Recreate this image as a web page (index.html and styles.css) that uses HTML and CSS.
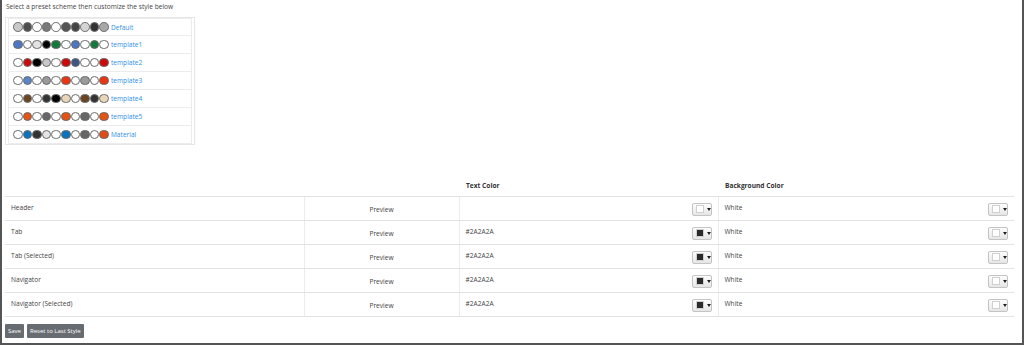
FILE: index.html
```html
<html lang="en">
<head>
    <meta charset="UTF-8">
    <title>Style Settings</title>
    <link rel="stylesheet" href="styles.css">
</head>
<body>
    <div class="frame">
        <p class="intro">Select a preset scheme then customize the style below</p>

        <div class="presets" id="presets">
            <!-- preset rows are built below -->
        </div>

        <table class="styles">
            <thead>
                <tr>
                    <th class="col-name"></th>
                    <th class="col-preview"></th>
                    <th class="col-text">Text Color</th>
                    <th class="col-bg">Background Color</th>
                </tr>
            </thead>
            <tbody id="style-rows">
            </tbody>
        </table>

        <div class="actions">
            <button>Save</button>
            <button>Reset to Last Style</button>
        </div>
    </div>

    <script>
        const presets = [
            { name: 'Default', colors: ['#c8c8c8', '#4e4e4e', '#fff', '#7a7a7a', '#fff', '#555', '#444', '#d4d4d4', '#333', '#a8a8a8'] },
            { name: 'template1', colors: ['#4b76c2', '#fff', '#e2e2e2', '#000', '#137a3c', '#fff', '#4b76c2', '#fff', '#137a3c', '#fff'] },
            { name: 'template2', colors: ['#fff', '#cc0a0a', '#000', '#c8c8c8', '#fff', '#cc0a0a', '#3b5584', '#fff', '#fff', '#cc0a0a'] },
            { name: 'template3', colors: ['#fff', '#5a84c8', '#fff', '#9a9a9a', '#fff', '#ea3510', '#fff', '#9a9a9a', '#fff', '#ea3510'] },
            { name: 'template4', colors: ['#fff', '#6a4522', '#fff', '#333', '#000', '#e9d6b8', '#fff', '#6a4522', '#333', '#e9d6b8'] },
            { name: 'template5', colors: ['#fff', '#e25314', '#fff', '#666', '#fff', '#e25314', '#fff', '#666', '#fff', '#e25314'] },
            { name: 'Material', colors: ['#fff', '#0b73bd', '#333', '#e4e4e4', '#fff', '#0b73bd', '#fff', '#666', '#fff', '#e04b16'] }
        ];

        const rows = [
            { name: 'Header', text: '', textSwatch: '#fff', bg: 'White' },
            { name: 'Tab', text: '#2A2A2A', textSwatch: '#2a2a2a', bg: 'White' },
            { name: 'Tab (Selected)', text: '#2A2A2A', textSwatch: '#2a2a2a', bg: 'White' },
            { name: 'Navigator', text: '#2A2A2A', textSwatch: '#2a2a2a', bg: 'White' },
            { name: 'Navigator (Selected)', text: '#2A2A2A', textSwatch: '#2a2a2a', bg: 'White' }
        ];

        function picker(color) {
            return `<span class="picker"><span class="swatch" style="background:${color}"></span><span class="caret"></span></span>`;
        }

        document.getElementById('presets').innerHTML = presets.map(p => `
            <div class="preset">
                ${p.colors.map(c => `<span class="dot" style="background:${c}"></span>`).join('')}
                <a href="#">${p.name}</a>
            </div>
        `).join('');

        document.getElementById('style-rows').innerHTML = rows.map(r => `
            <tr>
                <td class="col-name">${r.name}</td>
                <td class="col-preview"><span>Preview</span></td>
                <td class="col-text"><div class="cell"><span class="value">${r.text}</span>${picker(r.textSwatch)}</div></td>
                <td class="col-bg"><div class="cell"><span class="value">${r.bg}</span>${picker('#fff')}</div></td>
            </tr>
        `).join('');
    </script>
</body>
</html>
```

FILE: styles.css
```css
* {
    margin: 0;
    padding: 0;
    box-sizing: border-box;
}

body {
    font-family: 'Open Sans', sans-serif;
    font-size: 6.6px;
    color: #333;
    background: #fff;
}

.frame {
    width: 1024px;
    height: 345px;
    border-left: 2px solid #555;
    border-right: 2px solid #555;
    border-bottom: 2px solid #555;
    padding: 2px 8px 0 3px;
}

.intro {
    line-height: 10px;
    margin-left: 1px;
    color: #444;
}

.presets {
    width: 190px;
    margin-top: 5px;
    border: 1px solid #e6e6e6;
    padding: 0 2px;
}

.preset {
    display: flex;
    align-items: center;
    height: 18px;
    padding-left: 4px;
    border: 1px solid #ececec;
    border-top: none;
}

.preset:first-child {
    border-top: 1px solid #ececec;
}

.dot {
    width: 9.6px;
    height: 9.6px;
    border-radius: 50%;
    border: 1px solid #6a6a6a;
}

.preset a {
    color: #2d8fe8;
    text-decoration: none;
    margin-left: 2px;
}

table {
    font-size: inherit;
}

.styles {
    width: 1009px;
    margin-top: 36px;
    border-collapse: collapse;
}

.styles th {
    text-align: left;
    font-weight: bold;
    color: #333;
    height: 15px;
    padding: 0 7px;
    vertical-align: top;
    border-bottom: 1px solid #e2e2e2;
}

.styles td {
    height: 24px;
    padding: 0 6px;
    border-bottom: 1px solid #e2e2e2;
    vertical-align: top;
    color: #444;
}

.styles td + td {
    border-left: 1px solid #ececec;
}

.col-name {
    width: 299px;
    padding-top: 6px !important;
}

.col-preview {
    width: 155px;
    text-align: center;
    padding-top: 8px !important;
}

.col-text {
    width: 259px;
}

.cell {
    display: flex;
    justify-content: space-between;
    align-items: flex-start;
    padding-top: 6px;
}

.picker {
    display: flex;
    align-items: center;
    width: 20px;
    height: 13px;
    border: 1px solid #c4c4c4;
    border-radius: 2px;
    background: linear-gradient(#fdfdfd, #e6e6e6);
    padding-left: 3px;
}

.swatch {
    width: 8px;
    height: 8px;
    border: 1px solid #d0d0d0;
}

.caret {
    margin-left: 3px;
    border-left: 2px solid transparent;
    border-right: 2px solid transparent;
    border-top: 3px solid #222;
}

.actions {
    display: flex;
    gap: 3px;
    margin-top: 7px;
}

button {
    background-color: #676c72;
    color: #fff;
    border: none;
    height: 14px;
    padding: 0 3px;
    border-radius: 1px;
    font-family: 'Open Sans', sans-serif;
    font-size: 6px;
}
```
